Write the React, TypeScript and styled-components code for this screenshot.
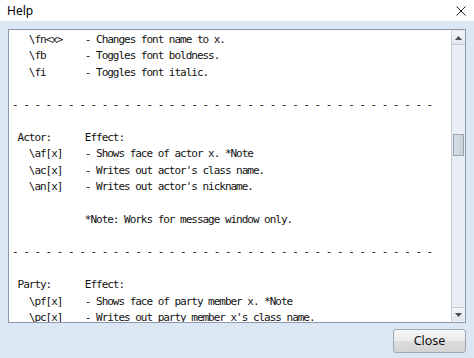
import React from "react";
import styled, { createGlobalStyle } from "styled-components";

const Global = createGlobalStyle`
  html, body { margin: 0; padding: 0; background: #dce7f4; }
  #root { width: 474px; height: 358px; }
`;

const Window = styled.div`
  width: 474px;
  height: 358px;
  display: flex;
  flex-direction: column;
  background: #dce7f4;
  font-family: "Noto Sans", "Open Sans", sans-serif;
  overflow: hidden;
`;

const TitleBar = styled.div`
  height: 21px;
  flex: none;
  background: #ffffff;
  display: flex;
  align-items: center;
  justify-content: space-between;
  padding: 0 8px 0 7px;
  font-size: 12px;
  color: #000;
`;

const CloseX = styled.svg`
  width: 10px;
  height: 10px;
  display: block;
`;

const Body = styled.div`
  flex: 1;
  display: flex;
  flex-direction: column;
  padding: 8px 8px 5px 8px;
  min-height: 0;
`;

const TextBox = styled.div`
  height: 294px;
  flex: none;
  box-sizing: border-box;
  border: 1px solid #8a9bb0;
  background: #ffffff;
  display: flex;
  overflow: hidden;
`;

const Content = styled.pre`
  flex: 1;
  margin: 0;
  padding: 2px 0 0 3px;
  font-family: "DejaVu Sans Mono", monospace;
  font-size: 11px;
  letter-spacing: -1.02px;
  line-height: 16.35px;
  color: #111;
  overflow: hidden;
  white-space: pre;
`;

const Scrollbar = styled.div`
  width: 13px;
  flex: none;
  display: flex;
  flex-direction: column;
  background: #e9eef4;
  border-left: 1px solid #c5ced8;
`;

const ArrowBtn = styled.div<{ $down?: boolean }>`
  height: 13px;
  flex: none;
  display: flex;
  align-items: center;
  justify-content: center;
  background: linear-gradient(#f4f6f8, #e1e6ec);
  border-bottom: 1px solid ${(p) => (p.$down ? "transparent" : "#c3ccd6")};
  border-top: 1px solid ${(p) => (p.$down ? "#c3ccd6" : "transparent")};
`;

const Track = styled.div`
  flex: 1;
  position: relative;
`;

const Thumb = styled.div`
  position: absolute;
  left: 1px;
  right: 1px;
  top: 89px;
  height: 22px;
  box-sizing: border-box;
  border: 1px solid #9aa6b3;
  background: linear-gradient(90deg, #d6dde5, #c9d1da);
`;

const Footer = styled.div`
  flex: 1;
  display: flex;
  justify-content: flex-end;
  align-items: flex-start;
  padding-top: 6px;
`;

const Button = styled.button`
  width: 73px;
  height: 24px;
  box-sizing: border-box;
  border: 1px solid #a0a6ad;
  border-radius: 3px;
  background: linear-gradient(#f6f6f6 0%, #ebebeb 50%, #dddddd 51%, #d3d3d3 100%);
  font-family: "Noto Sans", "Open Sans", sans-serif;
  font-size: 12.5px;
  color: #111;
  padding: 0;
  line-height: 20px;
`;

const Arrow = ({ down }: { down?: boolean }) => (
  <svg width="7" height="4" viewBox="0 0 7 4">
    <path d={down ? "M0 0 L7 0 L3.5 4 Z" : "M0 4 L7 4 L3.5 0 Z"} fill="#4a4f55" />
  </svg>
);

const dashes = Array(38).fill("-").join(" ");

const text = [
  "   \\fn<x>    - Changes font name to x.",
  "   \\fb       - Toggles font boldness.",
  "   \\fi       - Toggles font italic.",
  "",
  dashes,
  "",
  " Actor:      Effect:",
  "   \\af[x]    - Shows face of actor x. *Note",
  "   \\ac[x]    - Writes out actor's class name.",
  "   \\an[x]    - Writes out actor's nickname.",
  "",
  "             *Note: Works for message window only.",
  "",
  dashes,
  "",
  " Party:      Effect:",
  "   \\pf[x]    - Shows face of party member x. *Note",
  "   \\pc[x]    - Writes out party member x's class name.",
].join("\n");

export default function App() {
  return (
    <>
      <Global />
      <Window>
        <TitleBar>
          <span>Help</span>
          <CloseX viewBox="0 0 10 10">
            <path d="M0.5 0.5 L9.5 9.5 M9.5 0.5 L0.5 9.5" stroke="#222" strokeWidth="1" />
          </CloseX>
        </TitleBar>
        <Body>
          <TextBox>
            <Content>{text}</Content>
            <Scrollbar>
              <ArrowBtn>
                <Arrow />
              </ArrowBtn>
              <Track>
                <Thumb />
              </Track>
              <ArrowBtn $down>
                <Arrow down />
              </ArrowBtn>
            </Scrollbar>
          </TextBox>
          <Footer>
            <Button>Close</Button>
          </Footer>
        </Body>
      </Window>
    </>
  );
}
